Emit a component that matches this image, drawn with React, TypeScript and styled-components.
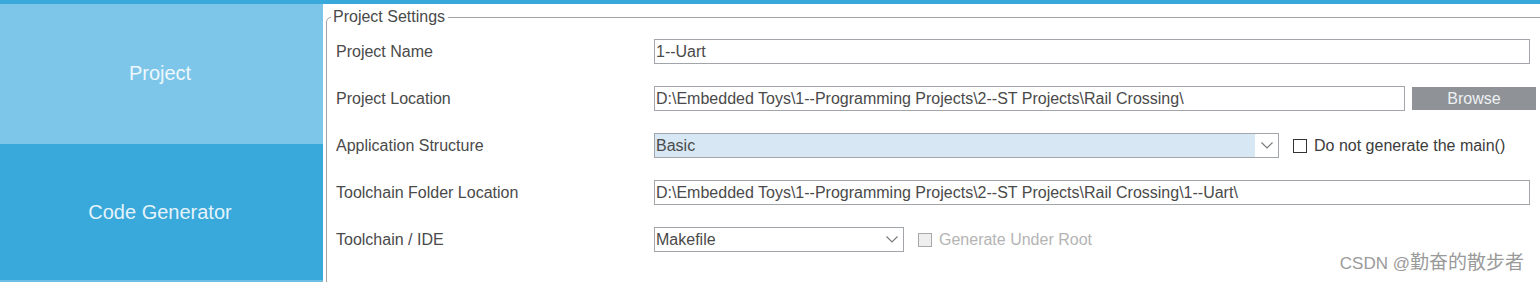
import React from "react";
import styled, { createGlobalStyle } from "styled-components";

const GlobalStyle = createGlobalStyle`
    html, body {
        margin: 0;
        padding: 0;
        background: #fff;
        overflow: hidden;
    }
    body {
        font-family: "Liberation Sans", Arial, sans-serif;
        color: #4a4a4a;
    }
`;

const Page = styled.div`
    position: relative;
    width: 1540px;
    height: 282px;
    display: flex;
    flex-direction: column;
    overflow: hidden;
`;

const TopBar = styled.div`
    height: 4px;
    background: #39a8da;
    flex-shrink: 0;
`;

const Body = styled.div`
    flex: 1;
    display: flex;
    min-height: 0;
`;

const SideBar = styled.div`
    width: 323px;
    flex-shrink: 0;
    display: flex;
    flex-direction: column;
`;

const Tab = styled.div<{ $active?: boolean; $h: number }>`
    height: ${(p) => p.$h}px;
    flex-shrink: 0;
    display: flex;
    align-items: center;
    justify-content: center;
    padding-right: 3px;
    font-size: 20px;
    color: ${(p) => (p.$active ? "#eef8fd" : "#e4f3fb")};
    background: ${(p) => (p.$active ? "#7dc6e9" : "#39a8da")};
    border-bottom: 2px solid ${(p) => (p.$active ? "#7dc6e9" : "#6fbfe5")};
`;

const Content = styled.div`
    flex: 1;
    padding-left: 3px;
    overflow: hidden;
`;

const Settings = styled.fieldset`
    margin: 4px -20px 0 0;
    padding: 0 0 0 4px;
    border: 1px solid #a3a3a3;
    border-top-left-radius: 5px;
    height: 300px;
`;

const Legend = styled.legend`
    padding: 0 3px 0 2px;
    font-size: 16px;
    line-height: 18px;
    color: #4a4a4a;
`;

const Rows = styled.div`
    display: grid;
    grid-template-columns: 318px 1fr;
    grid-auto-rows: 47px;
    padding: 2px 0 0 5px;
`;

const Label = styled.div`
    display: flex;
    align-items: center;
    font-size: 16px;
    color: #4a4a4a;
`;

const Controls = styled.div`
    display: flex;
    align-items: center;
`;

const TextBox = styled.div<{ $w: number }>`
    width: ${(p) => p.$w}px;
    height: 25px;
    box-sizing: border-box;
    border: 1px solid #a2a6aa;
    background: #fff;
    padding-left: 1px;
    display: flex;
    align-items: center;
    font-size: 16px;
    color: #4a4a4a;
    white-space: nowrap;
    overflow: hidden;
`;

const BrowseButton = styled.div`
    margin-left: 7px;
    width: 124px;
    height: 23px;
    background: #8f9398;
    color: #eef0f2;
    font-size: 16px;
    display: flex;
    align-items: center;
    justify-content: center;
`;

const Select = styled.div<{ $w: number }>`
    width: ${(p) => p.$w}px;
    height: 25px;
    box-sizing: border-box;
    border: 1px solid #a2a6aa;
    background: #fff;
    display: flex;
    font-size: 16px;
    color: #4a4a4a;
`;

const SelectValue = styled.div<{ $tint?: boolean }>`
    flex: 1;
    display: flex;
    align-items: center;
    padding-left: 1px;
    background: ${(p) => (p.$tint ? "#d8e7f4" : "#fff")};
`;

const Arrow = styled.div`
    width: 23px;
    display: flex;
    align-items: center;
    justify-content: center;
`;

const Check = styled.label<{ $disabled?: boolean; $gap: number }>`
    margin-left: ${(p) => p.$gap}px;
    display: flex;
    align-items: center;
    gap: 7px;
    font-size: 16px;
    color: ${(p) => (p.$disabled ? "#b4b4b4" : "#3c3c3c")};
`;

const Box = styled.span<{ $disabled?: boolean }>`
    width: 14px;
    height: 14px;
    box-sizing: border-box;
    border: 1px solid ${(p) => (p.$disabled ? "#a8a8a8" : "#333")};
    background: ${(p) => (p.$disabled ? "#eeeeee" : "#fff")};
`;

const Watermark = styled.div`
    position: absolute;
    right: 16px;
    bottom: 8px;
    display: flex;
    align-items: baseline;
    font-size: 17px;
    color: #9a9a9a;
    font-family: "Liberation Sans", Arial, sans-serif;
    white-space: nowrap;
`;

const WatermarkName = styled.span`
    font-size: 19px;
    font-family: "Noto Sans CJK SC", sans-serif;
    color: #9a9a9a;
`;

const Chevron = () => (
    <svg width="12" height="7" viewBox="0 0 12 7">
        <path d="M0.5 0.5 L6 6 L11.5 0.5" fill="none" stroke="#7a7a7a" strokeWidth="1.2" />
    </svg>
);

const PATH = "D:\\Embedded Toys\\1--Programming Projects\\2--ST Projects\\Rail Crossing\\";

export default function App() {
    return (
        <Page>
            <GlobalStyle />
            <TopBar />
            <Body>
                <SideBar>
                    <Tab $active $h={138}>Project</Tab>
                    <Tab $h={136}>Code Generator</Tab>
                </SideBar>
                <Content>
                    <Settings>
                        <Legend>Project Settings</Legend>
                        <Rows>
                            <Label>Project Name</Label>
                            <Controls>
                                <TextBox $w={876}>1--Uart</TextBox>
                            </Controls>

                            <Label>Project Location</Label>
                            <Controls>
                                <TextBox $w={751}>{PATH}</TextBox>
                                <BrowseButton>Browse</BrowseButton>
                            </Controls>

                            <Label>Application Structure</Label>
                            <Controls>
                                <Select $w={625}>
                                    <SelectValue $tint>Basic</SelectValue>
                                    <Arrow><Chevron /></Arrow>
                                </Select>
                                <Check $gap={14}>
                                    <Box />
                                    Do not generate the main()
                                </Check>
                            </Controls>

                            <Label>Toolchain Folder Location</Label>
                            <Controls>
                                <TextBox $w={876}>{PATH + "1--Uart\\"}</TextBox>
                            </Controls>

                            <Label>Toolchain / IDE</Label>
                            <Controls>
                                <Select $w={250}>
                                    <SelectValue>Makefile</SelectValue>
                                    <Arrow><Chevron /></Arrow>
                                </Select>
                                <Check $gap={14} $disabled>
                                    <Box $disabled />
                                    Generate Under Root
                                </Check>
                            </Controls>
                        </Rows>
                    </Settings>
                </Content>
            </Body>
            <Watermark>
                CSDN @<WatermarkName>勤奋的散步者</WatermarkName>
            </Watermark>
        </Page>
    );
}
